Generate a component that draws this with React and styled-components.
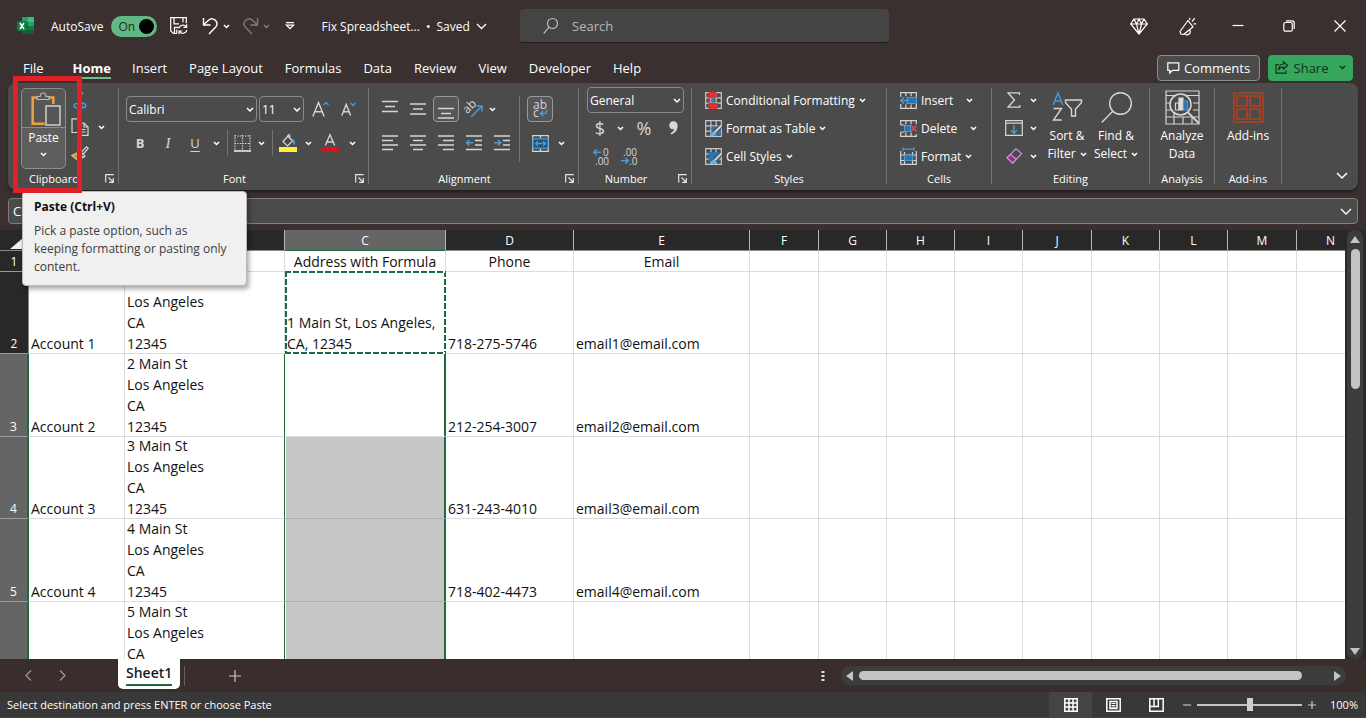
import React from "react";
import styled, { createGlobalStyle, css } from "styled-components";

const c = {
  window: "#3a302f",
  ribbon: "#4b4b4b",
  field: "#4b4b4b",
  text: "#ffffff",
  icon: "#d6d6d6",
  line: "#7a7a7a",
  blue: "#4a9bd6",
  green: "#1c6b3f",
  head: "#282828",
  headActive: "#656565",
  grid: "#dcdcdc",
};

const Global = createGlobalStyle`
  *, *::before, *::after { box-sizing: border-box; }
  body { margin: 0; background: ${c.window}; }
  body, button, input, select, textarea { font-family: "Open Sans", "Noto Sans", sans-serif; }
  button { border: 0; background: none; color: inherit; padding: 0; margin: 0; }
`;

const Window = styled.div`
  display: flex;
  flex-direction: column;
  height: 100vh;
  color: ${c.text};
  background: ${c.window};
  overflow: hidden;
`;

/* ---------- icons ---------- */
const Svg = styled.svg`
  display: block;
  flex: none;
  overflow: visible;
`;

function Icon({ w = 18, h = w, color = c.icon, sw = 1.2, children }) {
  return (
    <Svg width={w} height={h} viewBox={`0 0 ${w} ${h}`} fill="none" stroke={color} strokeWidth={sw} aria-hidden="true">
      {children}
    </Svg>
  );
}

const Chevron = ({ w = 8, sw = 1.5, color = "#fff" }) => (
  <Icon w={w} h={w / 2 + 1} sw={sw} color={color}>
    <path d={`M1 1 L${w / 2} ${w / 2} L${w - 1} 1`} />
  </Icon>
);

const ExcelLogo = () => (
  <Icon w={18} color="none">
    <path d="M6 0h5v5H5V1q0-1 1-1z" fill="#21a366" />
    <path d="M11 0h5q1 0 1 1v4h-6z" fill="#33c481" />
    <path d="M5 5h6v4H5z" fill="#107c41" />
    <path d="M11 5h6v4h-6z" fill="#21a366" />
    <path d="M5 9h6v8H6q-1 0-1-1z" fill="#185c37" />
    <path d="M11 9h6v4h-6z" fill="#107c41" />
    <path d="M11 13h6v3q0 1-1 1h-5z" fill="#185c37" />
    <rect x="0" y="4" width="10" height="10" rx="1" fill="#107c41" />
    <path d="M3 6l4 6M7 6l-4 6" stroke="#fff" strokeWidth="1.5" />
  </Icon>
);

const SaveIcon = () => (
  <Icon w={18} color="#fff">
    <path d="M7 16.5H3.500L.7 14V.7h15.600v5.500M4 .7v6.200h5M13 .7v4.500M4.500 16.500v-6.200h4M6.800 12.500v3.500" />
    <path d="M8.800 11.500a4 4 0 0 1 7.400-1.300M16.600 7.300v3.200h-3.200M16.800 13a4 4 0 0 1-7.400 1.300M9 17.200V14h3.200" />
  </Icon>
);

const UndoIcon = () => (
  <Icon w={17} h={18} color="#fff" sw={1.4}>
    <path d="M1.500 1v7h7M1.500 8 6.500 3.200a5 5 0 0 1 7.500 6.500L7 17" />
  </Icon>
);

const RedoIcon = () => (
  <Icon w={17} h={18} color="#857d7c" sw={1.3}>
    <path d="M15.500 1v7h-7M15.500 8l-5-4.800a5 5 0 0 0-7.500 6.500L10 17" />
  </Icon>
);

const CustomizeIcon = () => (
  <Icon w={10} h={8} color="#fff" sw={1.3}>
    <path d="M1 .7h8M1.500 3.200h7L5 6.700z" />
  </Icon>
);

const SearchIcon = () => (
  <Icon w={15} h={17} color="#c2c2c2" sw={1.1}>
    <circle cx="9.500" cy="5.500" r="5" />
    <path d="M6 9.200.6 15.600" />
  </Icon>
);

const DiamondIcon = () => (
  <Icon w={18} h={17} color="#fff" sw={1.2}>
    <path d="M4 1h10l3.300 5L9 16 .7 6zM.7 6h16.600M4 1l2.500 5L9 1l2.500 5L14 1M6.500 6 9 16l2.500-10" />
  </Icon>
);

const CoachIcon = () => (
  <Icon w={18} h={18} color="#fff" sw={1.2}>
    <path d="M9 3.500 1 14.500l.8 2.500 3 .3L14 10zM5.500 16.500a2.700 2.700 0 0 0 5.200-3.700M10.800 3V.8M13 4.500l2.800-3.300M14.500 6.800h2.700M14 10 9 3.500" />
  </Icon>
);

const MinimizeIcon = () => (
  <Icon w={12} h={12} color="#fff" sw={1.2}><path d="M.5 5.500h11" /></Icon>
);
const RestoreIcon = () => (
  <Icon w={12} h={12} color="#fff" sw={1.2}>
    <rect x=".8" y="2.500" width="8.500" height="8.700" rx="1.500" />
    <path d="M3 .8h6q2.200 0 2.200 2.200v6" />
  </Icon>
);
const CloseIcon = () => (
  <Icon w={12} h={12} color="#fff" sw={1.2}><path d="M.5.5l11 11M11.500.5l-11 11" /></Icon>
);
const CommentIcon = () => (
  <Icon w={13} h={12} color="#fff" sw={1.2}>
    <path d="M.8.8h11v7.500H5.500L2.800 11V8.300h-2z" />
  </Icon>
);
const ShareIcon = () => (
  <Icon w={14} h={13} color="#10331e" sw={1.2}>
    <path d="M4 3.500H1v8.700h10V9.500M8.500.8l4 3.700-4 3.700V6Q4.800 6 3.500 9 4 3.300 8.500 3z" />
  </Icon>
);

const ClipboardIcon = () => (
  <Icon w={32} h={34}>
    <path d="M8 5.500H2.700v26.300h12M18 5.500h5.300V12" stroke="#e8a33d" strokeWidth="2.600" />
    <path d="M7 7.500V4.500h3.200q0-3.500 2.900-3.500t2.900 3.500h3v3z" stroke="#b9b9b9" fill="#565656" />
    <rect x="16" y="14" width="14" height="19" stroke="#cfcfcf" strokeWidth="1.500" fill="#565656" />
  </Icon>
);
const CutIcon = () => (
  <Icon w={14} h={17}>
    <path d="M9.500.5 4.500 12M4.500.5 9.500 12" />
    <g stroke={c.blue} strokeWidth="1.600"><circle cx="3.300" cy="13.600" r="2.100" /><circle cx="10.500" cy="13.600" r="2.100" /></g>
  </Icon>
);
const CopyIcon = () => (
  <Icon w={18} h={18}>
    <path d="M7 14.500H1V.8h6.500l3 3M7 5h6l4 4v8.300H7zM13 5v4h4M9.500 11.500h5M9.500 14h5" />
  </Icon>
);
const PainterIcon = () => (
  <Icon w={18} h={16}>
    <path d="M10 6.500 15.500.8l1.700 1.500L12 8.500M8 4.500l6 5.500-1.800 1.500L6.500 6z" />
    <path d="M6 7 .8 9.500 7.500 15l4-3.500z" stroke="#f0c27b" fill="#c79345" />
  </Icon>
);
const GrowFont = () => (
  <Icon w={17} h={16} sw={1.4}>
    <path d="M.8 15.500 6.500 1.500l5.700 14M2.800 10.800h7.500" />
    <path d="M11.500 4 14 1.500 16.500 4" stroke={c.blue} />
  </Icon>
);
const ShrinkFont = () => (
  <Icon w={15} h={14} sw={1.400}>
    <path d="M.8 13.500 5.200 2.500l4.400 11M2.300 9.800h5.800" />
    <path d="M9.500 1 12 3.500 14.500 1" stroke={c.blue} />
  </Icon>
);
const BordersIcon = () => (
  <Icon w={17} h={17}>
    <path d="M.6 1h16M.6 8.500h16M1 0v15M8.500 0v15M16 0v15" strokeDasharray="1.400 1.200" />
    <path d="M0 16h17" strokeWidth="1.800" />
  </Icon>
);
const FillIcon = () => (
  <Icon w={18} h={18}>
    <path d="M4 7.500 9 2l4.500 5L8.500 12zM7 4.500 9.500.8q1.300-.5 1.300 1.500v3" />
    <path d="M13.500 5.500q2 1 1.600 5" stroke={c.blue} strokeWidth="1.800" />
    <path d="M0 15.500h18" stroke="#fff03a" strokeWidth="5" />
  </Icon>
);
const FontColorIcon = () => (
  <Icon w={18} h={18} sw={1.400}>
    <path d="M4.300 11.500 9 .8l4.700 10.700M5.900 8h6.200" />
    <path d="M0 15.500h18" stroke="#d8131a" strokeWidth="5" />
  </Icon>
);

const Lines = ({ rows, h = 16 }) => (
  <Icon w={16} h={h} sw={1.3}>
    <path d={rows.map(([x, y, l]) => `M${x} ${y}h${l}`).join("")} />
  </Icon>
);
const TopAlign = () => <Lines rows={[[0, 0.5, 16], [3, 5.5, 10], [0, 10.5, 16]]} h={17} />;
const MidAlign = () => <Lines rows={[[0, 3, 16], [3, 8, 10], [0, 13, 16]]} />;
const BotAlign = () => <Lines rows={[[0, 7.5, 16], [3, 12.5, 10], [0, 17, 16]]} h={17} />;
const LeftAlign = () => <Lines rows={[[0, 1, 16], [0, 5.500, 11], [0, 10, 16], [0, 14.500, 11]]} />;
const CenterAlign = () => <Lines rows={[[0, 1, 16], [3, 5.500, 10], [0, 10, 16], [3, 14.500, 10]]} />;
const RightAlign = () => <Lines rows={[[0, 1, 16], [5, 5.500, 11], [0, 10, 16], [5, 14.500, 11]]} />;
const IndentIcon = ({ right }) => (
  <Icon w={16} h={16} sw={1.3}>
    <path d="M0 1h16M9 5.500h7M9 10h7M0 14.500h16" />
    <path d={right ? "M0 7.700h6.500M4 5l2.700 2.700L4 10.400" : "M7 7.700H.5M3.200 5 .5 7.700l2.700 2.700"} stroke={c.blue} strokeWidth="1.500" />
  </Icon>
);
const SvgText = styled.text`
  font-family: "Open Sans", sans-serif;
  font-size: ${(p) => p.$s}px;
  fill: ${(p) => p.$c || c.icon};
  stroke: none;
`;
const OrientationIcon = () => (
  <Icon w={18} h={17}>
    <SvgText $s={12} x="0" y="10" transform="rotate(-45 5 9)">ab</SvgText>
    <path d="M6 16 16.500 5.500M11.500 5h5.500v5.500" stroke={c.blue} strokeWidth="1.500" />
  </Icon>
);
const WrapIcon = () => (
  <Icon w={16} h={18}>
    <SvgText $s={12} x="1" y="9">ab</SvgText>
    <SvgText $s={12} x="1" y="17">c</SvgText>
    <path d="M14.500 9.500v2.500q0 1.500-1.500 1.500H8.500M11 11l-2.600 2.500L11 16" stroke={c.blue} strokeWidth="1.500" />
  </Icon>
);
const MergeIcon = () => (
  <Icon w={17} h={17}>
    <path d="M.7.700h15.600v15.600H.7zM8.500.7v3M8.500 13.300v3" />
    <path d="M1 3.900h15v9.200H1z" stroke={c.blue} fill="#24506f" />
    <path d="M3.500 8.500h10M6 6 3.500 8.500 6 11M11 6l2.500 2.500L11 11" stroke={c.blue} strokeWidth="1.400" />
  </Icon>
);
const DecimalIcon = ({ less }) => (
  <Icon w={17} h={17}>
    {less ? (
      <>
        <SvgText $s={10} x="2" y="8">.00</SvgText>
        <SvgText $s={10} x="8" y="17">.0</SvgText>
        <path d="M0 12.800h7M4.500 10 7.300 12.800 4.500 15.600" stroke={c.blue} strokeWidth="1.500" />
      </>
    ) : (
      <>
        <SvgText $s={10} x="10" y="8">0</SvgText>
        <SvgText $s={10} x="2" y="17">.00</SvgText>
        <path d="M8 4.200H.7M3.500 1.400.7 4.200l2.800 2.800" stroke={c.blue} strokeWidth="1.500" />
      </>
    )}
  </Icon>
);
const CommaIcon = () => (
  <Icon w={9} h={14} color="none">
    <path d="M4.300.3Q8.600.500 8.600 5 8.400 11 2.500 13.500L1.500 12.400Q5 10.300 5.300 8 .5 8.800.3 4.500.4.500 4.300.3z" fill="#d9d9d9" />
  </Icon>
);

const TableBase = () => <path d="M.7.700h15.600v15.600H.7zM.7 5.900h15.600M.7 11.100h15.600M5.900.7v15.600M11.100.7v15.600" stroke="#c8c8c8" />;
const CondIcon = () => (
  <Icon w={17} h={17}>
    <TableBase />
    <path d="M4 .700h7v4.600H4zM4 11.700h8v4.600H4z" fill="#e23030" stroke="#e23030" />
    <path d="M6.200 6.500h3v4h-3z" fill="#2e83c9" stroke="none" />
    <path d="M4 6v5" stroke="#e23030" />
  </Icon>
);
const Brush = () => (
  <>
    <path d="M16.300 5.500 8.500 13.500" stroke="#4b4b4b" strokeWidth="4" />
    <path d="M16.500 5.500 9.500 12.500" stroke="#d6d6d6" strokeWidth="2" />
    <path d="M9.500 11.500q2 1 1 3-1.500 2-5.500 1.500 1.500-.5 1.500-2 1-2.500 3-2.500z" fill="#6fb6e8" stroke="#6fb6e8" strokeWidth=".6" />
  </>
);
const FmtTableIcon = () => (
  <Icon w={17} h={17}><TableBase /><path d="M6.500 6.500h9.300v9.300H6.500z" fill="#2474b8" stroke="none" /><Brush /></Icon>
);
const CellStylesIcon = () => (
  <Icon w={17} h={17}><TableBase /><path d="M3.500 4h11v9.500h-11z" fill="#2474b8" stroke="none" /><Brush /></Icon>
);
const InsertIcon = () => (
  <Icon w={17} h={17}>
    <path d="M.7 5V.700h15.600V5M.7 12v4.300h15.600V12M5.900.7v3.500M11.100.7v3.500M5.900 12.500v3.800M11.100 12.500v3.800" />
    <path d="M7 5.500h9.500v6H7z" fill="#2474b8" stroke={c.blue} />
    <path d="M9 8.500H.7M4 5.200.7 8.500 4 11.800" stroke={c.blue} strokeWidth="1.500" />
  </Icon>
);
const DeleteIcon = () => (
  <Icon w={17} h={17}>
    <path d="M.7 5V.700h15.600V4M.7 12v4.300h15.600V14M5.900.7v3.500M11.100.7v3.500M5.900 12.500v3.800M11.100 12.500v3.800M.7 5h4M.7 12h4" />
    <path d="M4.500 5.500h6v6h-6z" fill="#2474b8" stroke={c.blue} />
    <path d="M11 5.500l5.500 6M16.500 5.500l-5.500 6" stroke="#e0494f" strokeWidth="1.500" />
  </Icon>
);
const FormatIcon = () => (
  <Icon w={17} h={17}>
    <path d="M.7 3v13.300h15.600V3M.7 7h15.600M.7 12.500h15.600M4.500 4v12.300M12.500 4v12.300" />
    <path d="M4.500 7h8v5.500h-8z" fill="#2474b8" stroke={c.blue} />
    <path d="M3 1.200h11M3-.8v4M14-.8v4" stroke={c.blue} />
  </Icon>
);
const SumIcon = () => (
  <Icon w={14} h={16} sw={1.300}><path d="M12.500 3V.8H1L7.500 8 1 15.200h11.800V13" /></Icon>
);
const FillDownIcon = () => (
  <Icon w={18} h={16}>
    <path d="M.7.700h16.600v14.600H.7zM.7 3.200h16.600" />
    <path d="M9 5v8M6 10.300l3 3 3-3" stroke={c.blue} strokeWidth="1.500" />
  </Icon>
);
const EraserIcon = () => (
  <Icon w={17} h={16} color="#d58ed8">
    <path d="M1 9.800 10 .8l5.700 4.700-9 9.700z" />
    <path d="M1 9.800 4.500 6.300l5.700 5-3.500 3.900z" fill="#8f2f95" />
  </Icon>
);
const SortIcon = () => (
  <Icon w={31} h={31}>
    <path d="M1.200 13 6 1l4.800 12M2.800 9h6.400" stroke={c.blue} strokeWidth="1.400" />
    <path d="M1.500 16.500h8L1.500 28h8.300" strokeWidth="1.400" />
    <path d="M13.500 8h16v2.500l-6 6.800V24l-4 0v-6.700l-6-6.800z" strokeWidth="1.400" />
  </Icon>
);
const FindIcon = () => (
  <Icon w={31} h={31} sw={1.4}>
    <circle cx="19.500" cy="11.500" r="10.800" />
    <path d="M11.500 19.500.7 30.500" />
  </Icon>
);
const AnalyzeIcon = () => (
  <Icon w={35} h={35}>
    <path d="M1 1h33v33H1zM1 5.500h33M1 13h6M28 13h6M1 20h6M28 20h6M1 27h33M9 21v13M18 27v7M27 28v6" />
    <circle cx="15.500" cy="14.500" r="10.500" fill="#4b4b4b" strokeWidth="1.600" />
    <path d="M23 22.500 34 33.500" strokeWidth="1.800" />
    <path d="M10.500 13h3.500v7h-3.500z" />
    <path d="M14 8h4v12h-4z" fill="#e0e0e0" />
    <path d="M18.500 11h4v9h-4z" fill="#2474b8" stroke={c.blue} />
  </Icon>
);
const AddinsIcon = () => (
  <Icon w={31} h={31} color="#b5411d" sw={1.600}>
    <path d="M1 1h29v29H1zM4 4h10v10H4zM17 4h10v10H17zM4 17h10v10H4zM17 17h10v10H17z" />
  </Icon>
);
const LauncherIcon = () => (
  <Icon w={9} h={9} color="#e6e6e6">
    <path d="M.7 8.500V.7h8M3.500 3.500l4.500 4.500M8.300 4v4.300H4" />
  </Icon>
);

/* ---------- title bar ---------- */
const TitleBar = styled.header`
  display: flex;
  align-items: center;
  flex: none;
  height: 52px;
  font-size: 12px;
`;
const QuickAccess = styled.div`
  display: flex;
  align-items: center;
  flex: 0 1 520px;
  padding-left: 17px;
`;
const AutoSave = styled.label`
  display: flex;
  align-items: center;
  gap: 8px;
  margin: 0 13px 0 16px;
  font-size: 12px;
`;
const SwitchBox = styled.span`
  position: relative;
  display: grid;
`;
const Switch = styled.input`
  appearance: none;
  width: 46px;
  height: 21px;
  margin: 0;
  border-radius: 11px;
  background: #62b884;
  &::after {
    content: "";
    display: block;
    width: 15px;
    height: 15px;
    margin: 3px 3px 3px 28px;
    border-radius: 50%;
    background: #000;
  }
`;
const SwitchText = styled.span`
  position: absolute;
  left: 7px;
  top: 2px;
  line-height: 17px;
  font-size: 12px;
  color: #17301f;
`;
const PlainButton = styled.button`
  display: inline-flex;
  align-items: center;
  justify-content: center;
  flex: none;
  width: ${(p) => p.$w || 24}px;
  height: 24px;
  margin-left: ${(p) => p.$gap || 0}px;
`;
const DocTitle = styled.button`
  display: flex;
  align-items: center;
  gap: 6px;
  margin-left: 26px;
  font-size: 12px;
  white-space: nowrap;
`;
const SearchBox = styled.label`
  display: flex;
  align-items: center;
  gap: 14px;
  flex: 0 1 369px;
  height: 34px;
  padding-left: 22px;
  border: 1px solid #4a4343;
  border-bottom-color: #221c1c;
  border-radius: 4px;
  background: #444444;
`;
const SearchInput = styled.input`
  flex: 1;
  min-width: 0;
  border: 0;
  outline: 0;
  padding: 0;
  background: none;
  color: #fff;
  font-size: 13px;
  &::placeholder { color: #b8b8b8; opacity: 1; }
`;
const WindowButtons = styled.div`
  display: flex;
  margin: 0 1px 0 auto;
`;

/* ---------- ribbon tabs ---------- */
const TabBar = styled.nav`
  display: flex;
  align-items: center;
  flex: none;
  height: 31px;
  padding: 0 13px 0 12px;
`;
const Tab = styled.button`
  position: relative;
  height: 31px;
  padding: 0 11px;
  font-size: 13px;
  white-space: nowrap;
  ${(p) => p.$active && css`
    font-weight: 700;
    padding: 0 10px;
    margin-left: 8px;
    &::after {
      content: "";
      position: absolute;
      left: 10px;
      right: 10px;
      bottom: 4px;
      height: 2px;
      background: #6cc08b;
    }
  `}
`;
const ActionButton = styled.button`
  display: flex;
  align-items: center;
  justify-content: center;
  gap: ${(p) => (p.$primary ? 5 : 4)}px;
  width: ${(p) => (p.$primary ? 85 : 103)}px;
  height: 26px;
  margin-left: ${(p) => (p.$first ? "auto" : "8px")};
  border: 1px solid ${(p) => (p.$primary ? "#36a65d" : "#8b8b8b")};
  border-radius: 4px;
  background: ${(p) => (p.$primary ? "#36a65d" : "#4b4b4b")};
  color: ${(p) => (p.$primary ? "#10331e" : "#fff")};
  font-size: 13px;
`;
const ShareArrow = styled.span`
  margin-left: 6px;
`;

/* ---------- ribbon ---------- */
const Ribbon = styled.section`
  display: flex;
  flex: none;
  height: 107px;
  margin: 0 8px;
  padding: 5px 0 2px;
  border-radius: 8px;
  background: ${c.ribbon};
  box-shadow: 0 2px 3px rgba(0, 0, 0, 0.4);
`;
const GroupBox = styled.div`
  display: flex;
  flex-direction: column;
  flex: none;
  width: ${(p) => p.$w}px;
  height: 96px;
  border-right: 1px solid #737373;
`;
const GroupBody = styled.div`
  display: flex;
  flex: none;
  height: 82px;
  padding-left: ${(p) => p.$pad || 0}px;
  padding-top: ${(p) => p.$top || 0}px;
  justify-content: ${(p) => (p.$center ? "center" : "flex-start")};
`;
const GroupFoot = styled.div`
  display: flex;
  align-items: center;
  flex: none;
  height: 16px;
  padding: 0 4px;
  font-size: 11px;
`;
const GroupName = styled.span`
  flex: 1;
  padding-right: ${(p) => (p.$launcher ? 9 : 0)}px;
  text-align: center;
  white-space: nowrap;
`;
function Group({ name, w, pad, top, center, launcher, children }) {
  return (
    <GroupBox $w={w}>
      <GroupBody $pad={pad} $top={top} $center={center}>{children}</GroupBody>
      <GroupFoot>
        <GroupName $launcher={launcher}>{name}</GroupName>
        {launcher && <button aria-label={`${name} settings`}><LauncherIcon /></button>}
      </GroupFoot>
    </GroupBox>
  );
}
const Stack = styled.div`
  display: flex;
  flex-direction: column;
  gap: ${(p) => p.$gap ?? 4}px;
`;
const Row = styled.div`
  display: flex;
  align-items: center;
  height: ${(p) => p.$h || 24}px;
`;
const Tool = styled.button`
  display: flex;
  align-items: center;
  justify-content: center;
  flex: none;
  width: ${(p) => p.$w || 26}px;
  height: ${(p) => p.$h || 26}px;
  margin: 0 1px;
  border-radius: 4px;
  color: ${c.icon};
  font-size: ${(p) => p.$s || 13}px;
  ${(p) => p.$on && css`
    border: 1px solid #9a9a9a;
    background: #565656;
  `}
`;
const Bold = styled.b`font-weight: 700;`;
const Italic = styled.i`font-family: "Liberation Serif", serif; font-size: 15px;`;
const Under = styled.u`text-underline-offset: 3px;`;
const Arrow = styled.button`
  display: flex;
  align-items: center;
  justify-content: center;
  flex: none;
  width: ${(p) => p.$w || 16}px;
  height: 24px;
`;
const Divider = styled.span`
  flex: none;
  width: 1px;
  height: ${(p) => p.$h || 26}px;
  margin: 0 ${(p) => p.$r || 3}px 0 3px;
  background: #737373;
`;
const ComboBox = styled.span`
  position: relative;
  display: block;
  width: ${(p) => p.$w}px;
  margin-right: 2px;
`;
const Combo = styled.select`
  appearance: none;
  display: block;
  width: 100%;
  height: 26px;
  padding: 0 2px;
  border: 1px solid #8a8a8a;
  border-radius: 4px;
  background: ${c.field};
  color: #fff;
  font-size: 12px;
`;
const ComboArrow = styled.span`
  position: absolute;
  right: 3px;
  top: 11px;
  pointer-events: none;
`;
function Select({ w, label, value }) {
  return (
    <ComboBox $w={w}>
      <Combo aria-label={label} defaultValue={value}><option>{value}</option></Combo>
      <ComboArrow><Chevron /></ComboArrow>
    </ComboBox>
  );
}
const PasteArea = styled.div`
  position: relative;
  width: 45px;
`;
const PasteButton = styled.button`
  display: flex;
  flex-direction: column;
  align-items: center;
  width: 45px;
  height: 81px;
  border: 1px solid #8c8c8c;
  border-radius: 5px;
  background: linear-gradient(#565656 38px, #8c8c8c 38px, #8c8c8c 39px, #5e5e5e 39px);
  font-size: 12px;
`;
const PasteIconBox = styled.span`
  height: 38px;
  padding: 3px 0 0 4px;
`;
const PasteText = styled.span`
  margin-bottom: 3px;
  line-height: 22px;
`;
const Highlight = styled.div`
  position: absolute;
  left: -8px;
  top: -12px;
  z-index: 3;
  width: 69px;
  height: 117px;
  border: 5px solid #df2128;
  pointer-events: none;
`;
const Tooltip = styled.div`
  position: absolute;
  left: 1px;
  top: 103px;
  z-index: 2;
  width: 225px;
  height: 95px;
  padding: 6px 10px 0 11px;
  border: 1px solid #b8b8b8;
  border-radius: 4px;
  background: #f0f0f0;
  box-shadow: 2px 3px 5px rgba(0, 0, 0, 0.35);
  color: #3c3c3c;
  font-size: 12px;
  line-height: 18px;
`;
const TooltipTitle = styled.strong`
  display: block;
  margin-bottom: 6px;
  color: #111;
`;
const MenuTool = styled.button`
  display: flex;
  align-items: center;
  gap: 4px;
  height: 24px;
  font-size: 12px;
  white-space: nowrap;
`;
const BigTool = styled.button`
  display: flex;
  flex-direction: column;
  align-items: center;
  gap: ${(p) => p.$gap || 3}px;
  width: ${(p) => p.$w}px;
  padding-top: ${(p) => p.$top || 4}px;
  font-size: 12px;
  line-height: 18px;
  white-space: nowrap;
`;
const BigIcon = styled.span`
  height: 32px;
`;
const BigLine = styled.span`
  display: flex;
  align-items: center;
  justify-content: center;
  gap: 4px;
`;
const CollapseButton = styled.button`
  align-self: flex-end;
  margin: 0 10px 9px auto;
`;

/* ---------- formula bar ---------- */
const FormulaRow = styled.div`
  display: flex;
  flex: none;
  gap: 8px;
  height: 40px;
  padding: 8px 8px 6px;
`;
const NameBox = styled.input`
  width: 100px;
  height: 26px;
  padding: 0 4px;
  border: 1px solid #857c7c;
  border-radius: 4px;
  background: ${c.field};
  color: #fff;
  font-size: 13px;
`;
const FormulaBox = styled.div`
  display: flex;
  align-items: center;
  flex: 1;
  height: 26px;
  padding-right: 5px;
  border: 1px solid #857c7c;
  border-radius: 4px;
  background: ${c.field};
`;
const FormulaInput = styled.input`
  flex: 1;
  border: 0;
  outline: 0;
  background: none;
  color: #fff;
`;

/* ---------- sheet ---------- */
const SheetArea = styled.main`
  display: flex;
  flex: 1;
  min-height: 0;
  background: #2b2828;
`;
const SheetView = styled.div`
  flex: 1;
  min-width: 0;
  overflow: hidden;
  background: #fff;
`;
const Sheet = styled.table`
  table-layout: fixed;
  width: 1365px;
  border-collapse: separate;
  border-spacing: 0;
  color: #111;
  font-size: 14px;
  line-height: 21px;
`;
const Col = styled.col`
  width: ${(p) => p.$w}px;
`;
const ColHead = styled.th`
  height: 21px;
  padding: 2px 0 0;
  border-right: 1px solid #b5b5b5;
  border-bottom: 1px solid ${(p) => (p.$on ? c.green : "#8a8a8a")};
  background: ${(p) => (p.$on ? c.headActive : c.head)};
  color: #fff;
  font-size: 12px;
  font-weight: 400;
  line-height: 18px;
`;
const Corner = styled.th`
  padding: 0;
  background: ${c.head};
  border-bottom: 1px solid #8a8a8a;
`;
const CornerIcon = styled.div`
  padding: 7px 0 0 10px;
`;
const RowHead = styled.th`
  padding: 0;
  border-right: ${(p) => (p.$on ? `2px solid ${c.green}` : "1px solid #8a8a8a")};
  border-bottom: 1px solid #9a9a9a;
  background: ${(p) => (p.$on ? c.headActive : c.head)};
  color: #fff;
  font-size: 12px;
  font-weight: 400;
  line-height: 18px;
  vertical-align: bottom;
`;
const antsX = `repeating-linear-gradient(90deg, ${c.green} 0 6px, #fff 6px 8px)`;
const antsY = `repeating-linear-gradient(${c.green} 0 6px, #fff 6px 8px)`;
const Cell = styled.td`
  position: relative;
  padding: 0;
  border-right: 1px solid ${(p) => (p.$edge ? c.green : c.grid)};
  border-bottom: 1px solid ${(p) => (p.$shaded ? "#b0b0b0" : c.grid)};
  background: ${(p) => (p.$shaded ? "#c6c6c6" : "#fff")};
  ${(p) => p.$edge && p.$inner && css`box-shadow: inset -1px 0 ${c.green}, inset 1px 0 #fff;`}
  ${(p) => p.$copied && css`
    &::after {
      content: "";
      position: absolute;
      inset: -1px -1px -1px 0;
      background:
        ${antsX} top / 100% 2px no-repeat,
        ${antsX} bottom / 100% 2px no-repeat,
        ${antsY} left / 2px 100% no-repeat,
        ${antsY} right / 2px 100% no-repeat;
    }
  `}
`;
const CellText = styled.div`
  display: flex;
  flex-direction: column;
  justify-content: flex-end;
  height: ${(p) => p.$h}px;
  margin-bottom: -1px;
  padding: 0 2px;
  white-space: pre;
  text-align: ${(p) => (p.$center ? "center" : "left")};
`;

const VScroll = styled.div`
  display: flex;
  flex-direction: column;
  align-items: center;
  flex: none;
  width: 16px;
  margin: 0 3px 0 2px;
  padding: 6px 0 3px;
  border-radius: 8px;
  background: #3c3c3c;
`;
const VThumb = styled.div`
  width: 9px;
  height: 140px;
  margin: 5px 0 auto;
  border-radius: 5px;
  background: #c4c4c4;
`;

/* ---------- bottom bars ---------- */
const SheetBar = styled.div`
  display: flex;
  align-items: center;
  flex: none;
  height: 33px;
  padding: 0 20px 0 11px;
  background: #3a2e2d;
`;
const SheetTab = styled.button`
  align-self: flex-start;
  height: 30px;
  margin-left: 38px;
  padding: 0 8px;
  border-radius: 0 0 5px 5px;
  background: #fff;
  color: #1b1b1b;
  font-size: 14px;
`;
const SheetTabText = styled.span`
  display: block;
  border-bottom: 2px solid ${c.green};
  line-height: 22px;
  height: 24px;
  font-weight: 600;
`;
const TabDivider = styled.span`
  width: 1px;
  height: 20px;
  margin: 0 38px 0 4px;
  background: #6b6060;
`;
const HScroll = styled.div`
  display: flex;
  align-items: center;
  flex: 0 1 505px;
  height: 19px;
  padding: 0 5px;
  border-radius: 10px;
  background: #3c3c3c;
`;
const HThumb = styled.div`
  flex: 0 1 443px;
  height: 9px;
  margin: 0 auto 0 6px;
  border-radius: 5px;
  background: #c4c4c4;
`;
const More = styled.button`
  margin: 0 16px 0 auto;
`;
const StatusBar = styled.footer`
  display: flex;
  align-items: center;
  flex: none;
  height: 26px;
  padding: 0 8px 0 7px;
  border-bottom: 1px solid #5a3a3c;
  background: #383838;
  font-size: 11px;
`;
const StatusText = styled.span`
  margin-right: auto;
`;
const ViewButton = styled.button`
  display: flex;
  align-items: center;
  justify-content: center;
  width: 43px;
  height: 25px;
  background: ${(p) => (p.$on ? "#444444" : "transparent")};
`;
const Zoom = styled.input`
  appearance: none;
  width: 105px;
  height: 14px;
  margin: 0 5px;
  background: linear-gradient(#c4c4c4, #c4c4c4) center / 100% 2px no-repeat;
  &::-webkit-slider-thumb {
    appearance: none;
    width: 6px;
    height: 13px;
    background: #cfcfcf;
  }
`;
const ZoomText = styled.span`
  width: 41px;
  text-align: right;
`;

// Columns A and B have their letters under the open tooltip, so they carry none.
const columns = [["A", 96, ""], ["B", 160, ""], ["C", 161], ["D", 128], ["E", 176], ["F", 69], ["G", 68], ["H", 68], ["I", 68], ["J", 69], ["K", 68], ["L", 68], ["M", 69], ["N", 68]];
const address = (n) => `${n} Main St\nLos Angeles\nCA\n12345`;
const rows = [
  { h: 21, cells: ["", "", "Address with Formula", "Phone", "Email"] },
  { h: 82, cells: ["Account 1", address(1), "1 Main St, Los Angeles,\nCA, 12345", "718-275-5746", "email1@email.com"] },
  { h: 83, cells: ["Account 2", address(2), "", "212-254-3007", "email2@email.com"] },
  { h: 82, cells: ["Account 3", address(3), "", "631-243-4010", "email3@email.com"] },
  { h: 83, cells: ["Account 4", address(4), "", "718-402-4473", "email4@email.com"] },
  { h: 83, label: "", cells: ["", "5 Main St\nLos Angeles\nCA\n\u00a0"] },
];
const tabs = ["File", "Home", "Insert", "Page Layout", "Formulas", "Data", "Review", "View", "Developer", "Help"];

function Spreadsheet() {
  return (
    <Sheet>
      <colgroup>
        <Col $w={29} />
        {columns.map(([name, w]) => <Col key={name} $w={w} />)}
      </colgroup>
      <thead>
        <tr>
          <Corner>
            <CornerIcon><Icon w={13} h={12} color="none"><path d="M13 0v11H0z" fill="#f0f0f0" /></Icon></CornerIcon>
          </Corner>
          {columns.map(([name, , text = name]) => <ColHead key={name} $on={name === "C"}>{text}</ColHead>)}
        </tr>
      </thead>
      <tbody>
        {rows.map((row, r) => (
          <tr key={r}>
            <RowHead $on={r > 1}>{row.label ?? r + 1}</RowHead>
            {columns.map(([name], i) => (
              <Cell
                key={name}
                $edge={r > 1 && (name === "B" || name === "C")}
                $inner={name === "C"}
                $shaded={r > 2 && name === "C"}
                $copied={r === 1 && name === "C"}
              >
                <CellText $h={row.h} $center={r === 0}>{row.cells[i]}</CellText>
              </Cell>
            ))}
          </tr>
        ))}
      </tbody>
    </Sheet>
  );
}

export default function App() {
  return (
    <Window>
      <Global />
      <TitleBar>
        <QuickAccess>
          <ExcelLogo />
          <AutoSave>
            AutoSave
            <SwitchBox>
              <Switch type="checkbox" defaultChecked />
              <SwitchText>On</SwitchText>
            </SwitchBox>
          </AutoSave>
          <PlainButton $w={18} aria-label="Save"><SaveIcon /></PlainButton>
          <PlainButton $w={17} $gap={14} aria-label="Undo"><UndoIcon /></PlainButton>
          <PlainButton $w={8} $gap={3} aria-label="Undo history"><Chevron w={7} /></PlainButton>
          <PlainButton $w={17} $gap={12} aria-label="Redo"><RedoIcon /></PlainButton>
          <PlainButton $w={8} $gap={3} aria-label="Redo history"><Chevron w={7} color="#857d7c" /></PlainButton>
          <PlainButton $w={10} $gap={15} aria-label="Customize toolbar"><CustomizeIcon /></PlainButton>
          <DocTitle><span>Fix Spreadsheet...</span><span>•</span><span>Saved</span><Chevron w={11} sw={1.3} /></DocTitle>
        </QuickAccess>
        <SearchBox>
          <SearchIcon />
          <SearchInput placeholder="Search" aria-label="Search" />
        </SearchBox>
        <WindowButtons>
          <PlainButton $w={48} aria-label="Premium"><DiamondIcon /></PlainButton>
          <PlainButton $w={50} aria-label="Coming soon"><CoachIcon /></PlainButton>
          <PlainButton $w={50} aria-label="Minimize"><MinimizeIcon /></PlainButton>
          <PlainButton $w={51} aria-label="Restore"><RestoreIcon /></PlainButton>
          <PlainButton $w={51} aria-label="Close"><CloseIcon /></PlainButton>
        </WindowButtons>
      </TitleBar>

      <TabBar>
        {tabs.map((t) => <Tab key={t} $active={t === "Home"}>{t}</Tab>)}
        <ActionButton $first><CommentIcon />Comments</ActionButton>
        <ActionButton $primary><ShareIcon />Share<ShareArrow><Chevron w={7} color="#10331e" /></ShareArrow></ActionButton>
      </TabBar>

      <Ribbon>
        <Group name="Clipboard" w={111} pad={13} launcher>
          <PasteArea>
            <PasteButton aria-describedby="paste-tip">
              <PasteIconBox><ClipboardIcon /></PasteIconBox>
              <PasteText>Paste</PasteText>
              <Chevron w={7} />
            </PasteButton>
            <Tooltip id="paste-tip" role="tooltip">
              <TooltipTitle>Paste (Ctrl+V)</TooltipTitle>
              Pick a paste option, such as<br />keeping formatting or pasting only<br />content.
            </Tooltip>
            <Highlight />
          </PasteArea>
          <Stack $gap={3}>
            <Row><Tool $w={26} aria-label="Cut"><CutIcon /></Tool></Row>
            <Row><Tool $w={26} aria-label="Copy"><CopyIcon /></Tool><Arrow $w={14} aria-label="Copy options"><Chevron w={7} /></Arrow></Row>
            <Row><Tool $w={26} aria-label="Format painter"><PainterIcon /></Tool></Row>
          </Stack>
        </Group>

        <Group name="Font" w={250} pad={7} top={8} launcher>
          <Stack $gap={8}>
            <Row $h={26}>
              <Select w={131} label="Font" value="Calibri" />
              <Select w={45} label="Font size" value="11" />
              <Tool aria-label="Increase font size"><GrowFont /></Tool>
              <Tool aria-label="Decrease font size"><ShrinkFont /></Tool>
            </Row>
            <Row $h={26}>
              <Tool aria-label="Bold"><Bold>B</Bold></Tool>
              <Tool aria-label="Italic"><Italic>I</Italic></Tool>
              <Tool $w={24} aria-label="Underline"><Under>U</Under></Tool>
              <Arrow aria-label="Underline options"><Chevron w={7} /></Arrow>
              <Divider />
              <Tool $w={20} aria-label="Borders"><BordersIcon /></Tool>
              <Arrow aria-label="Border options"><Chevron w={7} /></Arrow>
              <Divider />
              <Tool $w={22} aria-label="Fill color"><FillIcon /></Tool>
              <Arrow aria-label="Fill options"><Chevron w={7} /></Arrow>
              <Tool aria-label="Font color"><FontColorIcon /></Tool>
              <Arrow aria-label="Font color options"><Chevron w={7} /></Arrow>
            </Row>
          </Stack>
        </Group>

        <Group name="Alignment" w={210} pad={7} top={8} launcher>
          <Stack $gap={8}>
            <Row $h={26}>
              <Tool aria-label="Top align"><TopAlign /></Tool>
              <Tool aria-label="Middle align"><MidAlign /></Tool>
              <Tool $on aria-label="Bottom align"><BotAlign /></Tool>
              <Tool aria-label="Orientation"><OrientationIcon /></Tool>
              <Arrow $w={8} aria-label="Orientation options"><Chevron w={7} /></Arrow>
            </Row>
            <Row $h={26}>
              <Tool aria-label="Align left"><LeftAlign /></Tool>
              <Tool aria-label="Center"><CenterAlign /></Tool>
              <Tool aria-label="Align right"><RightAlign /></Tool>
              <Tool aria-label="Decrease indent"><IndentIcon /></Tool>
              <Tool aria-label="Increase indent"><IndentIcon right /></Tool>
            </Row>
          </Stack>
          <Divider $h={66} $r={6} />
          <Stack $gap={8}>
            <Row $h={26}><Tool $on aria-label="Wrap text"><WrapIcon /></Tool></Row>
            <Row $h={26}>
              <Tool aria-label="Merge and center"><MergeIcon /></Tool>
              <Arrow $w={14} aria-label="Merge options"><Chevron w={7} /></Arrow>
            </Row>
          </Stack>
        </Group>

        <Group name="Number" w={113} pad={8} launcher>
          <Stack>
            <Row><Select w={97} label="Number format" value="General" /></Row>
            <Row>
              <Tool $s={18} $w={24} aria-label="Currency">$</Tool>
              <Arrow $w={14} aria-label="Currency options"><Chevron w={7} /></Arrow>
              <Tool $s={18} $w={32} aria-label="Percent">%</Tool>
              <Tool $w={22} aria-label="Comma style"><CommaIcon /></Tool>
            </Row>
            <Row>
              <Tool aria-label="Increase decimal"><DecimalIcon /></Tool>
              <Tool aria-label="Decrease decimal"><DecimalIcon less /></Tool>
            </Row>
          </Stack>
        </Group>

        <Group name="Styles" w={195} pad={13}>
          <Stack>
            <MenuTool><CondIcon />Conditional Formatting<Chevron w={7} /></MenuTool>
            <MenuTool><FmtTableIcon />Format as Table<Chevron w={7} /></MenuTool>
            <MenuTool><CellStylesIcon />Cell Styles<Chevron w={7} /></MenuTool>
          </Stack>
        </Group>

        <Group name="Cells" w={105} pad={13}>
          <Stack>
            <Row><MenuTool><InsertIcon />Insert</MenuTool><Arrow $w={32} aria-label="Insert options"><Chevron w={7} /></Arrow></Row>
            <Row><MenuTool><DeleteIcon />Delete</MenuTool><Arrow $w={32} aria-label="Delete options"><Chevron w={7} /></Arrow></Row>
            <Row><MenuTool><FormatIcon />Format<Chevron w={7} /></MenuTool></Row>
          </Stack>
        </Group>

        <Group name="Editing" w={158} pad={7}>
          <Stack>
            <Row><Tool $w={28} aria-label="AutoSum"><SumIcon /></Tool><Arrow $w={8} aria-label="AutoSum options"><Chevron w={7} /></Arrow></Row>
            <Row><Tool $w={28} aria-label="Fill"><FillDownIcon /></Tool><Arrow $w={8} aria-label="Fill direction"><Chevron w={7} /></Arrow></Row>
            <Row><Tool $w={28} aria-label="Clear"><EraserIcon /></Tool><Arrow $w={8} aria-label="Clear options"><Chevron w={7} /></Arrow></Row>
          </Stack>
          <BigTool $w={60}>
            <BigIcon><SortIcon /></BigIcon>
            <span><BigLine>Sort &amp;</BigLine><BigLine>Filter <Chevron w={7} /></BigLine></span>
          </BigTool>
          <BigTool $w={38}>
            <BigIcon><FindIcon /></BigIcon>
            <span><BigLine>Find &amp;</BigLine><BigLine>Select <Chevron w={7} /></BigLine></span>
          </BigTool>
        </Group>

        <Group name="Analysis" w={65} center>
          <BigTool $w={60} $top={2} $gap={5}>
            <BigIcon><AnalyzeIcon /></BigIcon>
            <span><BigLine>Analyze</BigLine><BigLine>Data</BigLine></span>
          </BigTool>
        </Group>

        <Group name="Add-ins" w={67} center>
          <BigTool $w={60}>
            <BigIcon><AddinsIcon /></BigIcon>
            <BigLine>Add-ins</BigLine>
          </BigTool>
        </Group>
        <CollapseButton aria-label="Collapse ribbon"><Chevron w={12} /></CollapseButton>
      </Ribbon>

      <FormulaRow>
        <NameBox aria-label="Name box" defaultValue="C3" />
        <FormulaBox>
          <FormulaInput aria-label="Formula" />
          <button aria-label="Expand formula bar"><Chevron w={12} sw={1.3} /></button>
        </FormulaBox>
      </FormulaRow>

      <SheetArea>
        <SheetView><Spreadsheet /></SheetView>
        <VScroll>
          <Icon w={10} h={8} color="none"><path d="M5 0 10 7H0z" fill="#c4c4c4" /></Icon>
          <VThumb />
          <Icon w={10} h={8} color="none"><path d="M0 0h10L5 7z" fill="#c4c4c4" /></Icon>
        </VScroll>
      </SheetArea>

      <SheetBar>
        <PlainButton $w={34} aria-label="Previous sheet"><Icon w={7} h={11} color="#a09a9a"><path d="M6 .5 1 5.500l5 5" /></Icon></PlainButton>
        <PlainButton $w={35} aria-label="Next sheet"><Icon w={7} h={11} color="#a09a9a"><path d="M1 .5l5 5-5 5" /></Icon></PlainButton>
        <SheetTab><SheetTabText>Sheet1</SheetTabText></SheetTab>
        <TabDivider />
        <PlainButton aria-label="New sheet"><Icon w={12} color="#c9c4c4"><path d="M6 0v12M0 6h12" /></Icon></PlainButton>
        <More aria-label="More"><Icon w={4} h={12} color="none"><path d="M.500 1h3v2h-3zM.500 5h3v2h-3zM.500 9h3v2h-3z" fill="#e0e0e0" /></Icon></More>
        <HScroll>
          <Icon w={7} h={10} color="none"><path d="M7 0v10L0 5z" fill="#c4c4c4" /></Icon>
          <HThumb />
          <Icon w={7} h={10} color="none"><path d="M0 0v10l7-5z" fill="#c4c4c4" /></Icon>
        </HScroll>
      </SheetBar>

      <StatusBar>
        <StatusText>Select destination and press ENTER or choose Paste</StatusText>
        <ViewButton $on aria-label="Normal view">
          <Icon w={14} color="#fff" sw={1.5}><path d="M.8.8h12.400v12.400H.8zM.8 5h12.400M.8 9h12.400M5 .8v12.400M9 .8v12.400" /></Icon>
        </ViewButton>
        <ViewButton aria-label="Page layout view">
          <Icon w={15} h={14} color="#fff" sw={1.5}><path d="M.8.8h13.400v12.400H.8zM4 3.500h7v7H4z" /><path d="M5.500 5.500h4M5.500 7.500h4M5.500 9.200h4" strokeWidth="1" /></Icon>
        </ViewButton>
        <ViewButton aria-label="Page break view">
          <Icon w={15} h={14} color="#fff" sw={1.5}><path d="M.8.8h13.400v12.400H.8zM.8 8.500h8.500V.8M5 .8v7.500" /></Icon>
        </ViewButton>
        <PlainButton $w={10} $gap={4} aria-label="Zoom out"><Icon w={8} color="#c4c4c4"><path d="M0 4h8" /></Icon></PlainButton>
        <Zoom type="range" min="0" max="100" defaultValue="50" aria-label="Zoom" />
        <PlainButton $w={10} aria-label="Zoom in"><Icon w={8} color="#c4c4c4"><path d="M0 4h8M4 0v8" /></Icon></PlainButton>
        <ZoomText>100%</ZoomText>
      </StatusBar>
    </Window>
  );
}
